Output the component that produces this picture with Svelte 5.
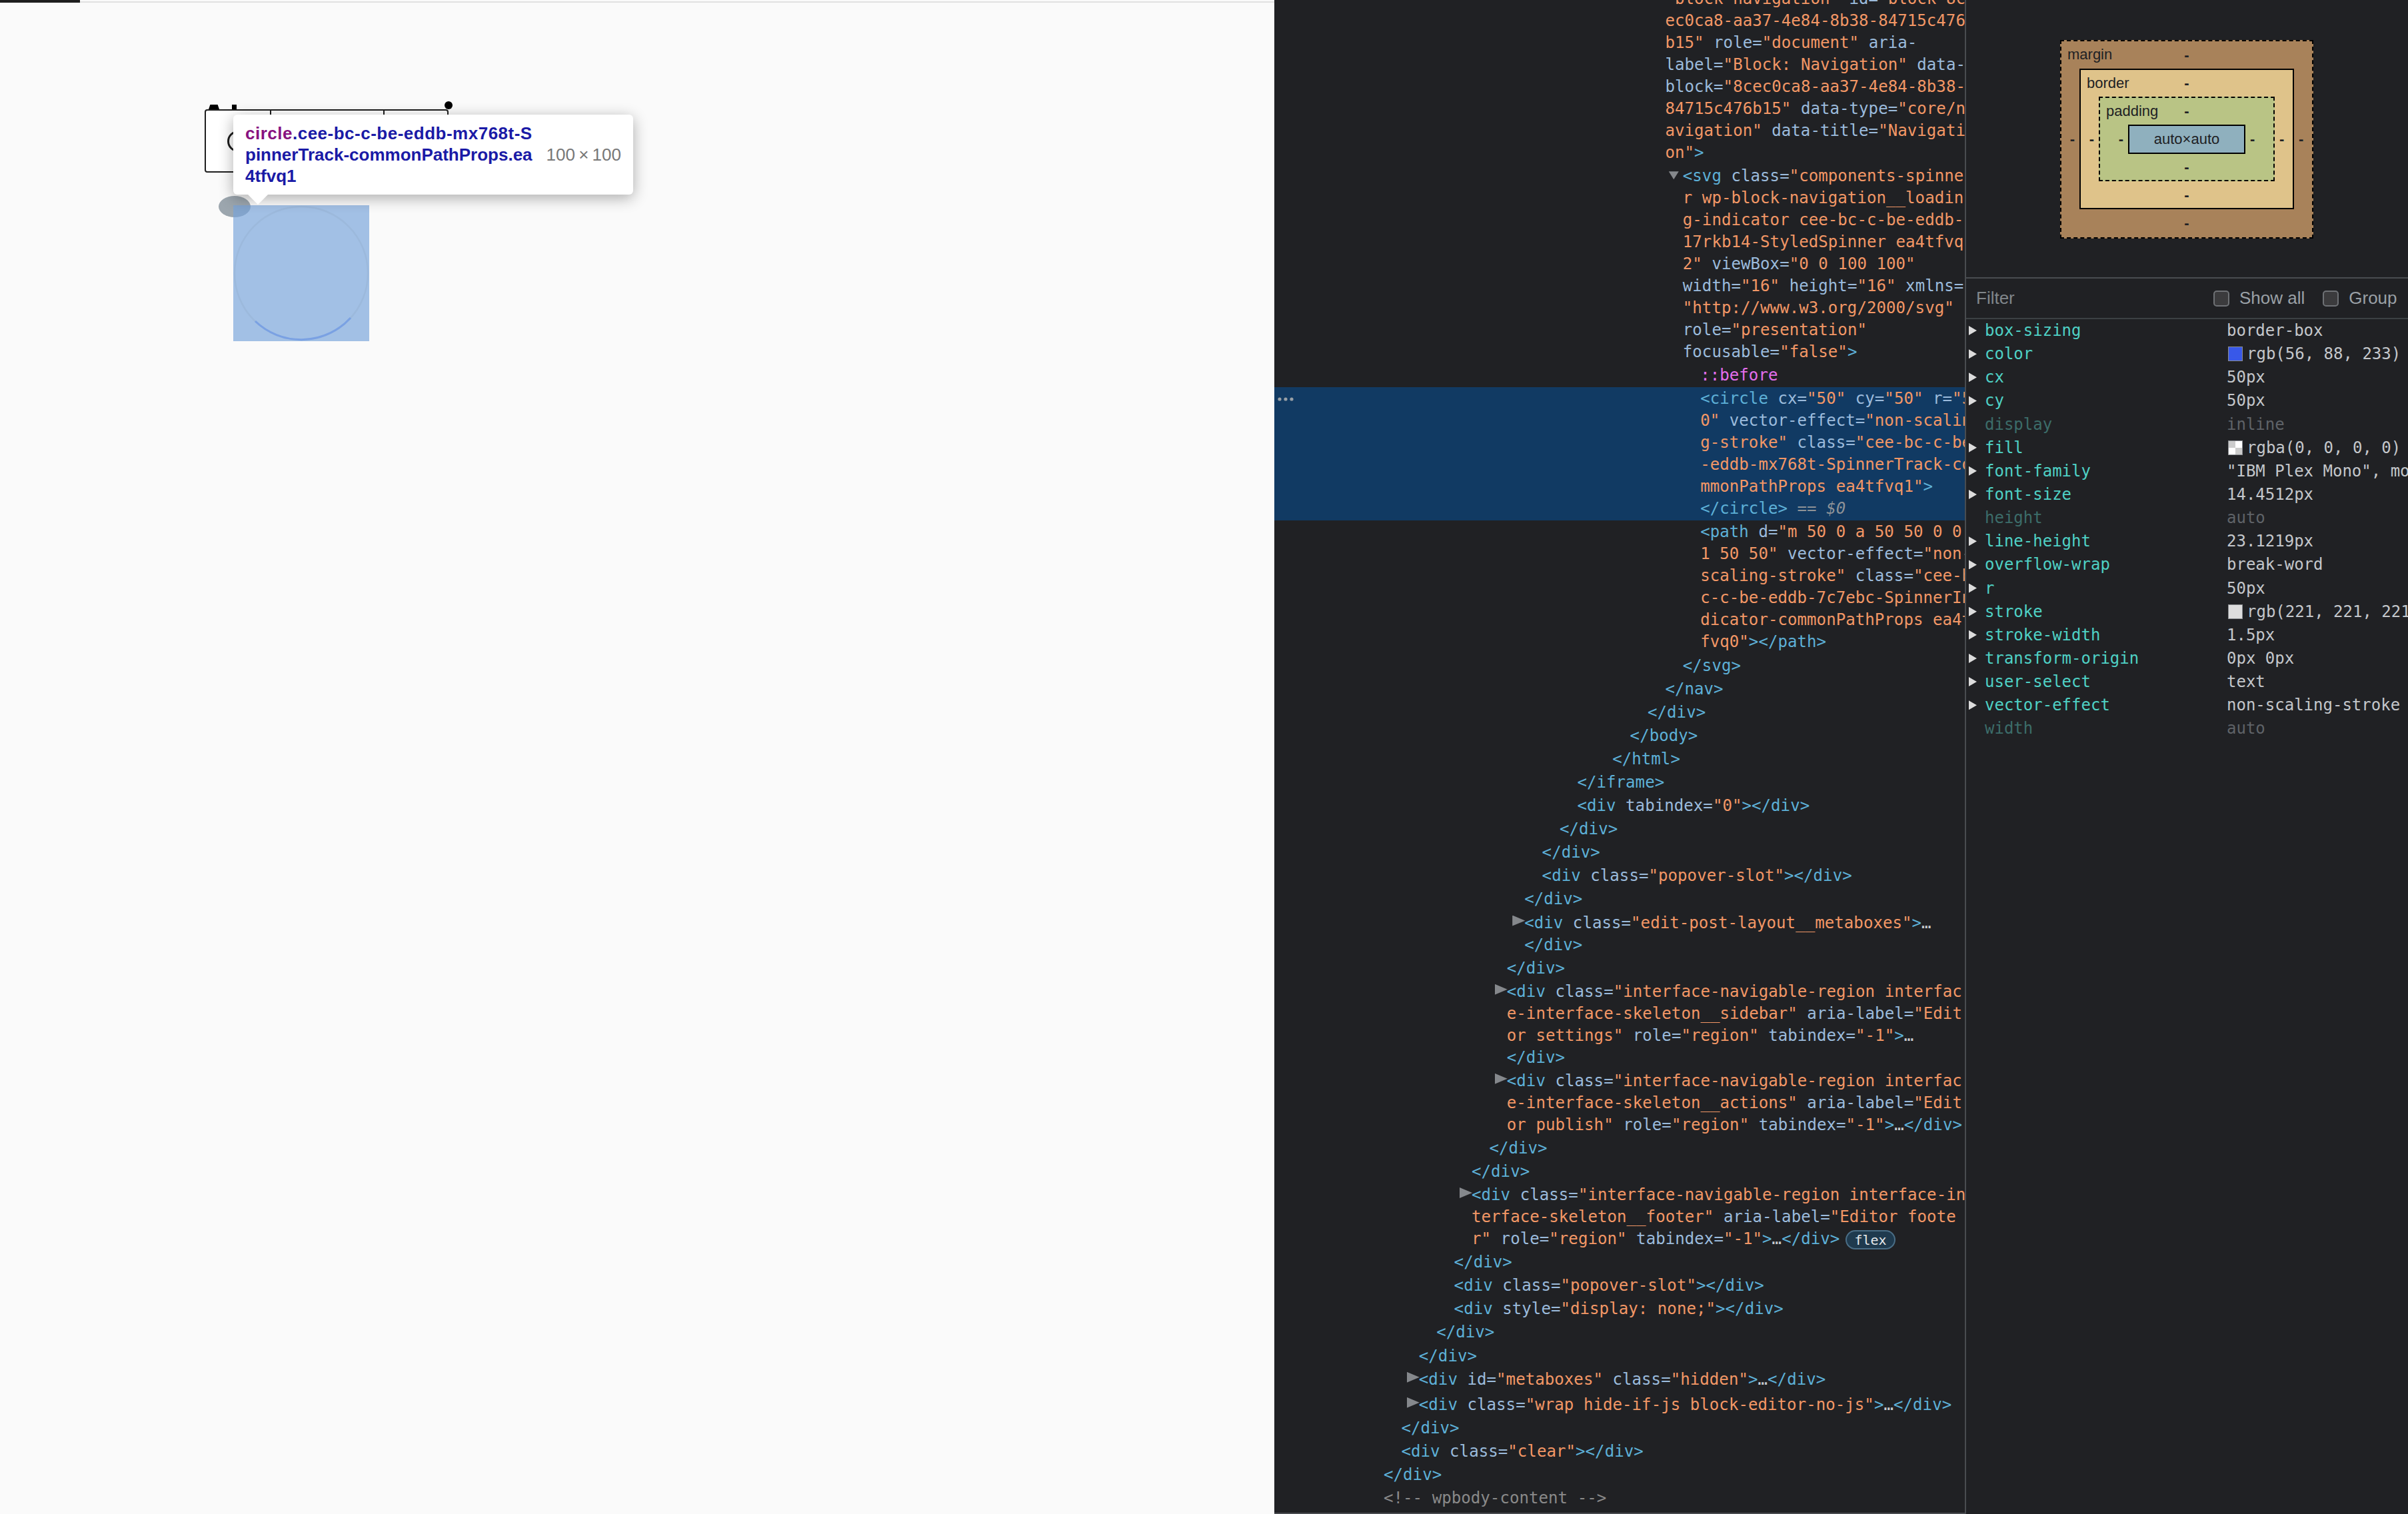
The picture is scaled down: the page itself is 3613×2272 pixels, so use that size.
<script>
  const parse = (s) =>
    s.split('|').map((p) => ({ c: p[0], t: p.slice(1) }));

  const nodes = [
    { l: 16, lines: ['v-block-navigation"|a id=|v"block-8c', 'vec0ca8-aa37-4e84-8b38-84715c476', 'vb15"|a role=|v"document"|a aria-', 'alabel=|v"Block: Navigation"|a data-', 'ablock=|v"8cec0ca8-aa37-4e84-8b38-', 'v84715c476b15"|a data-type=|v"core/n', 'vavigation"|a data-title=|v"Navigati', 'von"|t>'] },
    { l: 17, tri: 'down', lines: ['t<svg|a class=|v"components-spinne', 'vr wp-block-navigation__loadin', 'vg-indicator cee-bc-c-be-eddb-', 'v17rkb14-StyledSpinner ea4tfvq', 'v2"|a viewBox=|v"0 0 100 100"', 'awidth=|v"16"|a height=|v"16"|a xmlns=', 'v"http://www.w3.org/2000/svg"', 'arole=|v"presentation"', 'afocusable=|v"false"|t>'] },
    { l: 18, lines: ['k::before'] },
    { l: 18, sel: true, lines: ['t<circle|a cx=|v"50"|a cy=|v"50"|a r=|v"5', 'v0"|a vector-effect=|v"non-scalin', 'vg-stroke"|a class=|v"cee-bc-c-be', 'v-eddb-mx768t-SpinnerTrack-co', 'vmmonPathProps ea4tfvq1"|t>', 't</circle>|s == |i$0'] },
    { l: 18, lines: ['t<path|a d=|v"m 50 0 a 50 50 0 0', 'v1 50 50"|a vector-effect=|v"non-', 'vscaling-stroke"|a class=|v"cee-b', 'vc-c-be-eddb-7c7ebc-SpinnerIn', 'vdicator-commonPathProps ea4t', 'vfvq0"|t></path>'] },
    { l: 17, lines: ['t</svg>'] },
    { l: 16, lines: ['t</nav>'] },
    { l: 15, lines: ['t</div>'] },
    { l: 14, lines: ['t</body>'] },
    { l: 13, lines: ['t</html>'] },
    { l: 11, lines: ['t</iframe>'] },
    { l: 11, lines: ['t<div|a tabindex=|v"0"|t></div>'] },
    { l: 10, lines: ['t</div>'] },
    { l: 9, lines: ['t</div>'] },
    { l: 9, lines: ['t<div|a class=|v"popover-slot"|t></div>'] },
    { l: 8, lines: ['t</div>'] },
    { l: 8, tri: 'right', lines: ['t<div|a class=|v"edit-post-layout__metaboxes"|t>|e…', 't</div>'] },
    { l: 7, lines: ['t</div>'] },
    { l: 7, tri: 'right', lines: ['t<div|a class=|v"interface-navigable-region interfac', 've-interface-skeleton__sidebar"|a aria-label=|v"Edit', 'vor settings"|a role=|v"region"|a tabindex=|v"-1"|t>|e…', 't</div>'] },
    { l: 7, tri: 'right', lines: ['t<div|a class=|v"interface-navigable-region interfac', 've-interface-skeleton__actions"|a aria-label=|v"Edit', 'vor publish"|a role=|v"region"|a tabindex=|v"-1"|t>|e…|t</div>'] },
    { l: 6, lines: ['t</div>'] },
    { l: 5, lines: ['t</div>'] },
    { l: 5, tri: 'right', flex: true, lines: ['t<div|a class=|v"interface-navigable-region interface-in', 'vterface-skeleton__footer"|a aria-label=|v"Editor foote', 'vr"|a role=|v"region"|a tabindex=|v"-1"|t>|e…|t</div>'] },
    { l: 4, lines: ['t</div>'] },
    { l: 4, lines: ['t<div|a class=|v"popover-slot"|t></div>'] },
    { l: 4, lines: ['t<div|a style=|v"display: none;"|t></div>'] },
    { l: 3, lines: ['t</div>'] },
    { l: 2, lines: ['t</div>'] },
    { l: 2, tri: 'right', lines: ['t<div|a id=|v"metaboxes"|a class=|v"hidden"|t>|e…|t</div>'] },
    { l: 2, tri: 'right', gap: true, lines: ['t<div|a class=|v"wrap hide-if-js block-editor-no-js"|t>|e…|t</div>'] },
    { l: 1, lines: ['t</div>'] },
    { l: 1, lines: ['t<div|a class=|v"clear"|t></div>'] },
    { l: 0, lines: ['t</div>'] },
    { l: 0, lines: ['m<!-- wpbody-content -->'] }
  ];

  const styles = [
    { n: 'box-sizing', v: 'border-box' },
    { n: 'color', v: 'rgb(56, 88, 233)', sw: 'blue' },
    { n: 'cx', v: '50px' },
    { n: 'cy', v: '50px' },
    { n: 'display', v: 'inline', dim: true },
    { n: 'fill', v: 'rgba(0, 0, 0, 0)', sw: 'clear' },
    { n: 'font-family', v: '"IBM Plex Mono", monospace' },
    { n: 'font-size', v: '14.4512px' },
    { n: 'height', v: 'auto', dim: true },
    { n: 'line-height', v: '23.1219px' },
    { n: 'overflow-wrap', v: 'break-word' },
    { n: 'r', v: '50px' },
    { n: 'stroke', v: 'rgb(221, 221, 221)', sw: 'gray' },
    { n: 'stroke-width', v: '1.5px' },
    { n: 'transform-origin', v: '0px 0px' },
    { n: 'user-select', v: 'text' },
    { n: 'vector-effect', v: 'non-scaling-stroke' },
    { n: 'width', v: 'auto', dim: true }
  ];
</script>

<div class="root">
  <section class="page">
    <div class="progress"><div class="done"></div><div class="rest"></div></div>

    <div class="toolbar">
      <div class="cell first"><span class="ring"></span></div>
      <div class="cell mid"></div>
      <div class="cell last"></div>
      <span class="mark-a"></span>
      <span class="mark-b"></span>
      <span class="mark-dot"></span>
    </div>

    <span class="oval"></span>
    <div class="highlight">
      <svg viewBox="0 0 204 204" width="204" height="204" aria-hidden="true">
        <circle cx="102" cy="102" r="100" fill="none" stroke="#9cb9dc" stroke-width="2.5" />
        <path d="M33 174 A100 100 0 0 0 176 169" fill="none" stroke="#7aa1e3" stroke-width="3" />
      </svg>
    </div>

    <div class="tip">
      <div class="tip-name">
        <div class="tip-first"><span class="purple">circle</span>.cee-bc-c-be-eddb-mx768t-S</div>
        <div>pinnerTrack-commonPathProps.ea</div>
        <div>4tfvq1</div>
      </div>
      <div class="tip-size">100 × 100</div>
      <span class="tip-arrow"></span>
    </div>
  </section>

  <section class="elements">
    <div class="tree">
      {#each nodes as node}
        <div class="row" class:sel={node.sel} class:gap={node.gap} style="padding-left:{164 + node.l * 26.4}px">
          {#if node.sel}
            <svg class="more" width="26" height="8" viewBox="0 0 26 8" aria-hidden="true">
              <circle cx="4" cy="4" r="2.6" /><circle cx="13" cy="4" r="2.6" /><circle cx="22" cy="4" r="2.6" />
            </svg>
          {/if}
          {#each node.lines as line, i}
            <div class="line">{#if i === 0 && node.tri}<span class="tri {node.tri}"></span>{/if}{#each parse(line) as seg}<span class={seg.c}>{seg.t}</span>{/each}{#if node.flex && i === node.lines.length - 1}<span class="badge">flex</span>{/if}</div>
          {/each}
        </div>
      {/each}
    </div>
  </section>

  <aside class="side">
    <div class="boxwrap">
      <div class="box margin">
        <span class="label">margin</span>
        <span class="d top">-</span>
        <span class="d left">-</span>
        <div class="box border">
          <span class="label">border</span>
          <span class="d top">-</span>
          <span class="d left">-</span>
          <div class="box padding">
            <span class="label">padding</span>
            <span class="d top">-</span>
            <span class="d left">-</span>
            <div class="content">auto×auto</div>
            <span class="d right">-</span>
            <span class="d bottom">-</span>
          </div>
          <span class="d right">-</span>
          <span class="d bottom">-</span>
        </div>
        <span class="d right">-</span>
        <span class="d bottom">-</span>
      </div>
    </div>

    <div class="filter">
      <span class="filter-label">Filter</span>
      <label class="check"><span class="cb"></span>Show all</label>
      <label class="check group"><span class="cb"></span>Group</label>
    </div>

    <div class="props">
      {#each styles as s}
        <div class="prop" class:dim={s.dim}>
          {#if !s.dim}<span class="ptri"></span>{/if}
          <span class="pname">{s.n}</span>
          <span class="pval">{#if s.sw}<span class="sw {s.sw}"></span>{/if}{s.v}</span>
        </div>
      {/each}
    </div>
  </aside>
</div>

<style>
  :global(body) {
    margin: 0;
    background: #202124;
  }
  .root {
    display: flex;
    width: 3613px;
    height: 2272px;
    overflow: hidden;
  }

  /* left page */
  .page {
    position: relative;
    flex: 0 0 1912px;
    background: #fafafa;
    font-family: "Liberation Sans", Arial, sans-serif;
  }
  .progress {
    display: flex;
    height: 4px;
  }
  .done {
    width: 120px;
    background: #1e1e1e;
  }
  .rest {
    flex: 1;
    margin-top: 2px;
    background: #e0e0e0;
  }
  .toolbar {
    position: relative;
    display: flex;
    box-sizing: border-box;
    width: 366px;
    height: 95px;
    margin: 160px 0 0 307px;
    background: #fff;
    border: 2px solid #1e1e1e;
    border-radius: 4px;
  }
  .cell {
    box-sizing: border-box;
    border-right: 2px solid #1e1e1e;
  }
  .first {
    width: 98px;
    display: flex;
    align-items: center;
    padding: 0 0 0 32px;
  }
  .mid {
    width: 170px;
  }
  .last {
    flex: 1;
    border-right: 0;
  }
  .ring {
    box-sizing: border-box;
    width: 32px;
    height: 32px;
    border: 3px solid #1e1e1e;
    border-radius: 50%;
  }
  .mark-a {
    position: absolute;
    left: 4px;
    top: -9px;
    width: 16px;
    height: 7px;
    background: #000;
    clip-path: polygon(15% 0, 85% 0, 100% 100%, 0 100%);
  }
  .mark-b {
    position: absolute;
    left: 39px;
    top: -9px;
    width: 7px;
    height: 7px;
    background: #000;
  }
  .mark-dot {
    position: absolute;
    left: 358px;
    top: -14px;
    width: 12px;
    height: 12px;
    border-radius: 50%;
    background: #000;
  }
  .oval {
    position: absolute;
    left: 328px;
    top: 294px;
    width: 48px;
    height: 32px;
    border-radius: 50%;
    background: #9ca6ae;
  }
  .highlight {
    position: absolute;
    left: 350px;
    top: 308px;
    width: 204px;
    height: 204px;
    background: rgba(120, 163, 218, 0.68);
  }
  .highlight svg {
    display: block;
  }
  .tip {
    position: absolute;
    left: 350px;
    top: 172px;
    box-sizing: border-box;
    display: flex;
    align-items: center;
    justify-content: space-between;
    width: 600px;
    height: 120px;
    padding: 0 18px;
    background: #fff;
    border-radius: 6px;
    box-shadow: 0 5px 22px rgba(0, 0, 0, 0.32);
    font-size: 26px;
  }
  .tip-name {
    font-weight: 700;
    line-height: 32px;
    color: #1a1aa6;
    white-space: nowrap;
  }
  .tip-first {
    letter-spacing: 0.5px;
  }
  .purple {
    color: #881280;
  }
  .tip-size {
    color: #777;
    white-space: nowrap;
    word-spacing: -2px;
  }
  .tip-arrow {
    position: absolute;
    left: 22px;
    top: 120px;
    width: 30px;
    height: 15px;
    background: #fff;
    clip-path: polygon(0 0, 100% 0, 50% 100%);
  }

  /* elements */
  .elements {
    flex: 0 0 1036px;
    box-sizing: border-box;
    height: 2272px;
    overflow: hidden;
    background: #202124;
    border-bottom: 2px solid #494c50;
    font-family: "DejaVu Sans Mono", monospace;
    font-size: 24.15px;
  }
  .tree {
    margin-top: -19px;
  }
  .row {
    position: relative;
    padding-top: 1.05px;
    padding-bottom: 1.05px;
  }
  .row.sel {
    background: #113a63;
  }
  .row.gap {
    margin-top: 3px;
  }
  .more {
    position: absolute;
    left: 4px;
    top: 14px;
    fill: #9aa0a6;
  }
  .line {
    height: 33px;
    line-height: 33px;
    white-space: pre;
  }
  .t { color: #5db0d7; }
  .a { color: #9bbbdc; }
  .v { color: #f29766; }
  .k { color: #e36eec; }
  .m { color: #898989; }
  .e { color: #c8ccd0; }
  .s { color: #8e9297; }
  .i { color: #8e9297; font-style: italic; }
  .p { color: #c8ccd0; }
  .tri {
    position: absolute;
    margin-left: -18px;
    margin-top: 5px;
    width: 12px;
    height: 16px;
    background: #85888c;
  }
  .tri.right {
    clip-path: polygon(0 0, 100% 50%, 0 100%);
  }
  .tri.down {
    margin-left: -21px;
    margin-top: 9px;
    width: 15px;
    height: 12px;
    clip-path: polygon(0 0, 100% 0, 50% 100%);
  }
  .badge {
    display: inline-block;
    box-sizing: border-box;
    height: 29px;
    margin-left: 9px;
    padding: 0 11px;
    line-height: 26px;
    font-size: 20px;
    vertical-align: middle;
    color: #e8eaed;
    background: #1f3a4e;
    border: 2px solid #4a6d85;
    border-radius: 15px;
  }

  /* sidebar */
  .side {
    flex: 1;
    min-width: 0;
    overflow: hidden;
    border-left: 2px solid #494c50;
    background: #202124;
  }
  .boxwrap {
    box-sizing: border-box;
    height: 416px;
    padding: 60px 0 0 141px;
    font-family: "Liberation Sans", Arial, sans-serif;
    font-size: 22px;
    color: #202124;
  }
  .box {
    position: relative;
    box-sizing: border-box;
    display: grid;
  }
  .margin {
    width: 380px;
    height: 298px;
    grid-template-columns: 27px 1fr 27px;
    grid-template-rows: 41px 1fr 42px;
    background: #a8825a;
    border: 2px dashed #000;
  }
  .border {
    grid-column: 2;
    grid-row: 2;
    width: 322px;
    height: 211px;
    grid-template-columns: 27px 1fr 27px;
    grid-template-rows: 40px 1fr 42px;
    background: #dfc38a;
    border: 2px solid #000;
  }
  .padding {
    grid-column: 2;
    grid-row: 2;
    width: 264px;
    height: 127px;
    grid-template-columns: 42px 1fr 42px;
    grid-template-rows: 40px 1fr 39px;
    background: #b9c485;
    border: 2px dashed #000;
  }
  .content {
    grid-column: 2;
    grid-row: 2;
    box-sizing: border-box;
    display: flex;
    align-items: center;
    justify-content: center;
    background: #8fb0be;
    border: 2px solid #000;
  }
  .label {
    position: absolute;
    left: 9px;
    top: 5px;
    line-height: 30px;
  }
  .d {
    display: flex;
    align-items: center;
    justify-content: center;
    font-weight: 700;
  }
  .top { grid-column: 2; grid-row: 1; }
  .left { grid-column: 1; grid-row: 2; justify-content: flex-end; padding-right: 7px; }
  .right { grid-column: 3; grid-row: 2; justify-content: flex-start; padding-left: 7px; }
  .bottom { grid-column: 2; grid-row: 3; }

  .filter {
    box-sizing: border-box;
    display: flex;
    align-items: center;
    height: 63px;
    padding-left: 15px;
    border-top: 2px solid #494c50;
    border-bottom: 2px solid #3c4043;
    font-family: "Liberation Sans", Arial, sans-serif;
    font-size: 26px;
    color: #9aa0a6;
  }
  .filter-label {
    flex: 0 0 356px;
    color: #80868b;
  }
  .check {
    display: flex;
    align-items: center;
    gap: 15px;
    margin-right: 27px;
    white-space: nowrap;
  }
  .cb {
    box-sizing: border-box;
    width: 24px;
    height: 24px;
    background: #3b3b3d;
    border: 2px solid #6e7175;
    border-radius: 5px;
  }
  .props {
    font-family: "DejaVu Sans Mono", monospace;
    font-size: 24px;
  }
  .prop {
    position: relative;
    display: grid;
    grid-template-columns: 363px 1fr;
    height: 35.15px;
    padding-left: 28px;
    line-height: 35px;
    white-space: nowrap;
  }
  .ptri {
    position: absolute;
    left: 4px;
    top: 10px;
    width: 12px;
    height: 14px;
    background: #dcdcdc;
    clip-path: polygon(0 0, 100% 50%, 0 100%);
  }
  .pname {
    color: #4fd1c5;
  }
  .pval {
    color: #c4c7cb;
  }
  .prop.dim .pname {
    color: #3c6c69;
  }
  .prop.dim .pval {
    color: #5f6368;
  }
  .sw {
    display: inline-block;
    box-sizing: border-box;
    width: 22px;
    height: 22px;
    margin: 0 6px 0 2px;
    vertical-align: -3px;
    border: 1px solid #8a8d91;
  }
  .sw.blue {
    background: #3858e9;
  }
  .sw.gray {
    background: #dddddd;
  }
  .sw.clear {
    background: conic-gradient(#fff 25%, #ccc 0 50%, #fff 0 75%, #ccc 0);
  }
</style>
